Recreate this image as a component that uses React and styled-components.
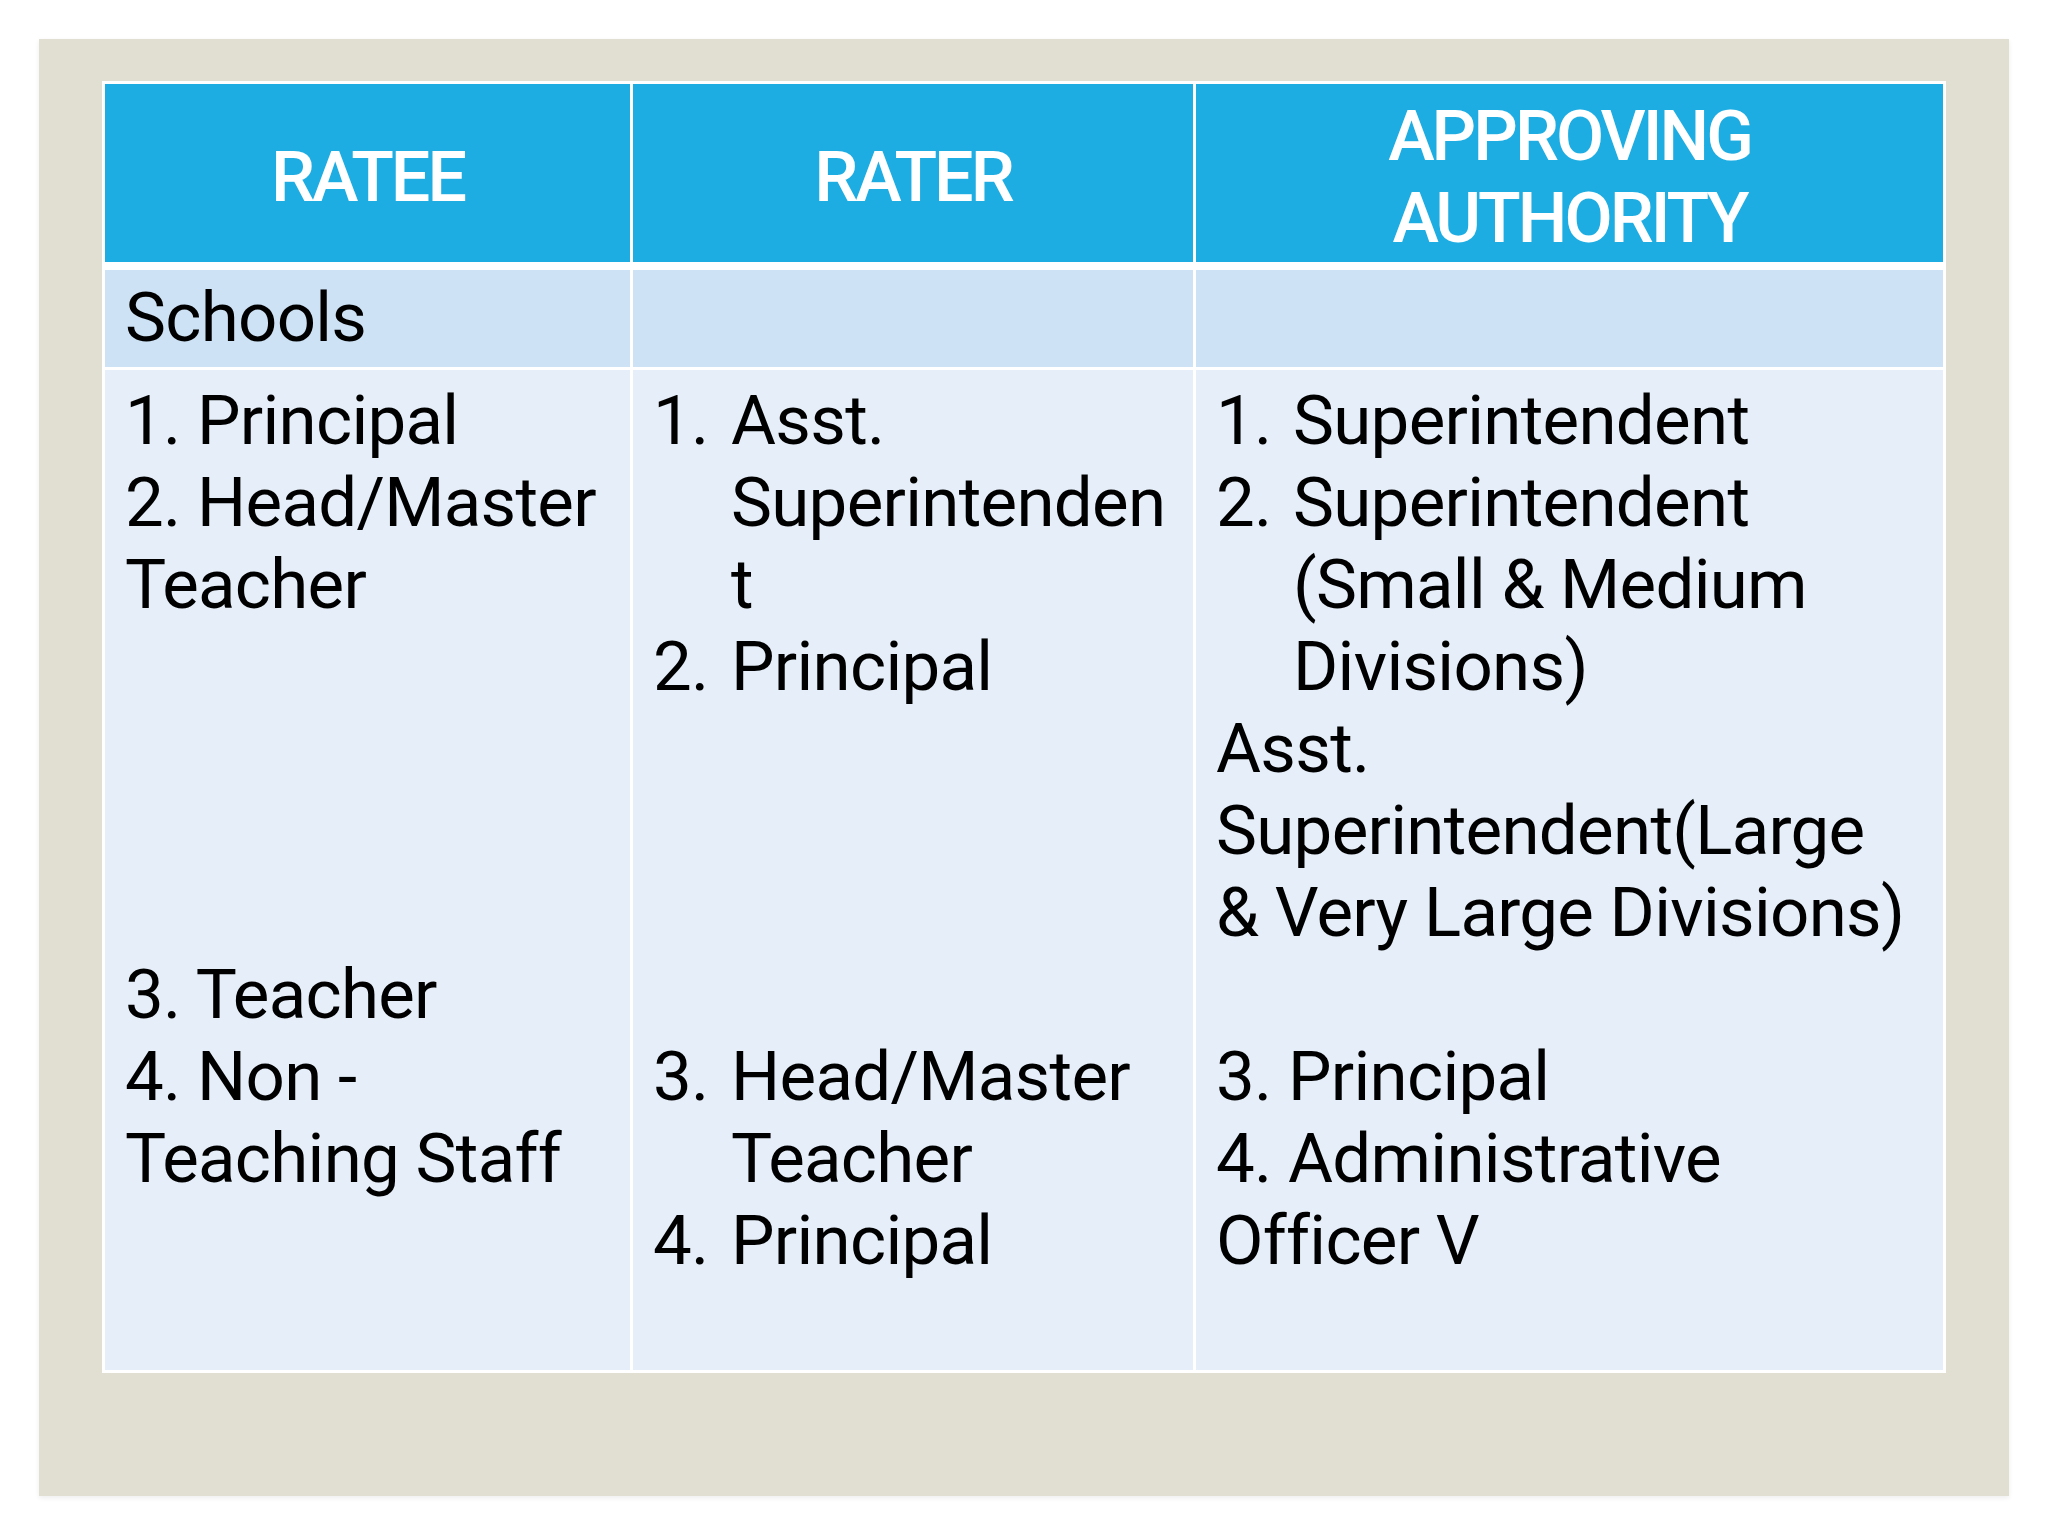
import React from "react";
import styled, { createGlobalStyle } from "styled-components";

const GlobalStyle = createGlobalStyle`
  html, body {
    margin: 0;
    padding: 0;
    background: #ffffff;
  }
  body {
    font-family: Roboto, "Open Sans", "Liberation Sans", sans-serif;
  }
`;

const Page = styled.div`
  width: 2048px;
  height: 1536px;
  box-sizing: border-box;
  padding: 39px;
  background: #ffffff;
`;

const Slide = styled.div`
  width: 1970px;
  height: 1457px;
  box-sizing: border-box;
  padding: 42px 63px 0 63px;
  background: #e1ded2;
  box-shadow: 0 2px 5px rgba(0, 0, 0, 0.07);
`;

const Table = styled.div`
  display: grid;
  grid-template-columns: 525px 560px 747px;
  grid-template-rows: 183px 97px 1000px;
  gap: 3px;
  padding: 3px;
  width: fit-content;
  background: #ffffff;
  font-size: 69px;
  line-height: 82px;
  letter-spacing: -0.7px;
  color: #000000;
`;

const HeaderCell = styled.div`
  margin-bottom: 5px;
  padding-top: 7px;
  background: #1eade2;
  color: #ffffff;
  font-size: 70px;
  font-weight: 500;
  letter-spacing: -3px;
  display: flex;
  flex-direction: column;
  align-items: center;
  justify-content: center;
  text-align: center;
`;

const Cell = styled.div`
  box-sizing: border-box;
  background: ${(p) => (p.$tone === "band" ? "#cde2f4" : "#e6eff9")};
  padding: ${(p) => (p.$tone === "band" ? "7px 20px 0" : "10px 20px 0")};
  display: flex;
  flex-direction: column;
`;

const Line = styled.div`
  height: 82px;
  white-space: nowrap;
`;

const Spacer = styled.div`
  height: ${(p) => p.$lines * 82}px;
  flex: none;
`;

const Item = styled.div`
  display: flex;
`;

const Num = styled.div`
  width: ${(p) => p.$w || 78}px;
  flex: none;
  height: 82px;
  white-space: nowrap;
`;

const ItemBody = styled.div`
  display: flex;
  flex-direction: column;
`;

const ListItem = ({ n, lines, w }) => (
  <Item>
    <Num $w={w}>{n}</Num>
    <ItemBody>
      {lines.map((l, i) => (
        <Line key={i}>{l}</Line>
      ))}
    </ItemBody>
  </Item>
);

export default function App() {
  return (
    <>
      <GlobalStyle />
      <Page>
        <Slide>
          <Table>
            <HeaderCell>
              <Line>RATEE</Line>
            </HeaderCell>
            <HeaderCell>
              <Line>RATER</Line>
            </HeaderCell>
            <HeaderCell>
              <Line>APPROVING</Line>
              <Line>AUTHORITY</Line>
            </HeaderCell>

            <Cell $tone="band">
              <Line>Schools</Line>
            </Cell>
            <Cell $tone="band" />
            <Cell $tone="band" />

            <Cell>
              <Line>1. Principal</Line>
              <Line>2. Head/Master</Line>
              <Line>Teacher</Line>
              <Spacer $lines={4} />
              <Line>3. Teacher</Line>
              <Line>4. Non -</Line>
              <Line>Teaching Staff</Line>
            </Cell>

            <Cell>
              <ListItem n="1." lines={["Asst.", "Superintenden", "t"]} />
              <ListItem n="2." lines={["Principal"]} />
              <Spacer $lines={4} />
              <ListItem n="3." lines={["Head/Master", "Teacher"]} />
              <ListItem n="4." lines={["Principal"]} />
            </Cell>

            <Cell>
              <ListItem n="1." lines={["Superintendent"]} w={77} />
              <ListItem
                n="2."
                lines={["Superintendent", "(Small & Medium", "Divisions)"]}
                w={77}
              />
              <Line>Asst.</Line>
              <Line>Superintendent(Large</Line>
              <Line>& Very Large Divisions)</Line>
              <Spacer $lines={1} />
              <Line>3. Principal</Line>
              <Line>4. Administrative</Line>
              <Line>Officer V</Line>
            </Cell>
          </Table>
        </Slide>
      </Page>
    </>
  );
}
